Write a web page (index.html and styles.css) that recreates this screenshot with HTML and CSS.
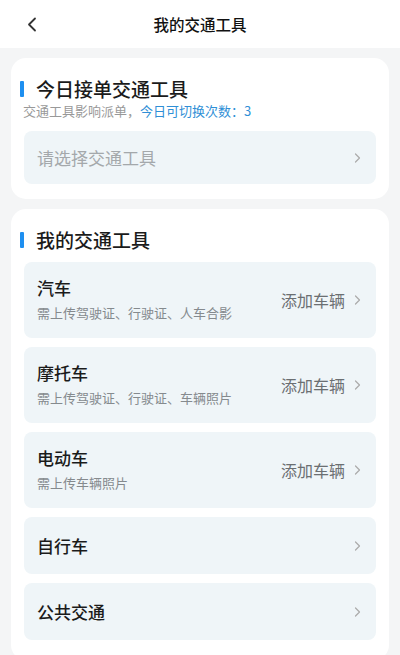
FILE: index.html
```html
<!DOCTYPE html>
<html lang="zh-CN">
<head>
<meta charset="utf-8">
<title>我的交通工具</title>
<link rel="stylesheet" href="styles.css">
</head>
<body>
<header class="topbar">
  <div class="back">
    <svg width="10" height="15" viewBox="0 0 10 15"><polyline points="8,1.5 2,7.5 8,13.5" fill="none" stroke="#333" stroke-width="1.8" stroke-linecap="round" stroke-linejoin="round"/></svg>
  </div>
  <div class="topbar-title">我的交通工具</div>
  <div></div>
</header>
<main class="content">
  <section class="card card-today">
    <h2 class="card-title">今日接单交通工具</h2>
    <p class="card-sub">交通工具影响派单，<span class="blue">今日可切换次数：3</span></p>
    <div class="select-box">
      <span class="placeholder">请选择交通工具</span>
      <svg class="chev" width="7" height="12" viewBox="0 0 7 12"><polyline points="1.5,2 5.5,6 1.5,10" fill="none" stroke="#aaa" stroke-width="1.2" stroke-linecap="round" stroke-linejoin="round"/></svg>
    </div>
  </section>
  <section class="card card-mine">
    <h2 class="card-title">我的交通工具</h2>
    <div class="list">
      <div class="row row-tall">
        <div class="row-main">
          <div class="row-title">汽车</div>
          <div class="row-desc">需上传驾驶证、行驶证、人车合影</div>
        </div>
        <span class="row-action">添加车辆</span>
        <svg class="chev" width="7" height="12" viewBox="0 0 7 12"><polyline points="1.5,2 5.5,6 1.5,10" fill="none" stroke="#aaa" stroke-width="1.2" stroke-linecap="round" stroke-linejoin="round"/></svg>
      </div>
      <div class="row row-tall">
        <div class="row-main">
          <div class="row-title">摩托车</div>
          <div class="row-desc">需上传驾驶证、行驶证、车辆照片</div>
        </div>
        <span class="row-action">添加车辆</span>
        <svg class="chev" width="7" height="12" viewBox="0 0 7 12"><polyline points="1.5,2 5.5,6 1.5,10" fill="none" stroke="#aaa" stroke-width="1.2" stroke-linecap="round" stroke-linejoin="round"/></svg>
      </div>
      <div class="row row-tall">
        <div class="row-main">
          <div class="row-title">电动车</div>
          <div class="row-desc">需上传车辆照片</div>
        </div>
        <span class="row-action">添加车辆</span>
        <svg class="chev" width="7" height="12" viewBox="0 0 7 12"><polyline points="1.5,2 5.5,6 1.5,10" fill="none" stroke="#aaa" stroke-width="1.2" stroke-linecap="round" stroke-linejoin="round"/></svg>
      </div>
      <div class="row row-short">
        <div class="row-main">
          <div class="row-title">自行车</div>
        </div>
        <svg class="chev" width="7" height="12" viewBox="0 0 7 12"><polyline points="1.5,2 5.5,6 1.5,10" fill="none" stroke="#aaa" stroke-width="1.2" stroke-linecap="round" stroke-linejoin="round"/></svg>
      </div>
      <div class="row row-short">
        <div class="row-main">
          <div class="row-title">公共交通</div>
        </div>
        <svg class="chev" width="7" height="12" viewBox="0 0 7 12"><polyline points="1.5,2 5.5,6 1.5,10" fill="none" stroke="#aaa" stroke-width="1.2" stroke-linecap="round" stroke-linejoin="round"/></svg>
      </div>
    </div>
  </section>
</main>
</body>
</html>
```
FILE: styles.css
```css
* { box-sizing: border-box; }
html, body { margin: 0; padding: 0; }
body {
  background: #f4f5f6;
  font-family: "Noto Sans CJK SC", "Noto Sans", sans-serif;
  color: #222;
  height: 655px;
  overflow: hidden;
}
.topbar {
  height: 48px;
  background: #fff;
  display: grid;
  grid-template-columns: 60px 1fr 60px;
  align-items: center;
}
.back {
  padding-left: 27px;
  display: flex;
  align-items: center;
}
.topbar-title {
  text-align: center;
  font-size: 15.5px;
  font-weight: 500;
  color: #111;
}
.content {
  padding: 10px 11px 0;
  display: flex;
  flex-direction: column;
  gap: 10px;
}
.card {
  background: #fff;
  border-radius: 15px;
  padding: 18px 13px 15px;
}
.card-mine { padding-bottom: 20px; }
.card-title {
  margin: 0;
  font-size: 19px;
  line-height: 26px;
  font-weight: 500;
  color: #1b1b1b;
  display: flex;
  align-items: center;
  gap: 12px;
  margin-left: -4px;
}
.card-title::before {
  content: "";
  width: 4px;
  height: 16px;
  background: #1e8ff0;
  border-radius: 1px;
}
.card-sub {
  margin: 0;
  margin-left: -1px;
  font-size: 13px;
  line-height: 18px;
  color: #999;
}
.blue { color: #2f8fd6; }
.select-box {
  margin-top: 11px;
  height: 53px;
  background: #eff5f8;
  border-radius: 8px;
  display: flex;
  align-items: center;
  padding: 0 15px 0 13px;
}
.placeholder {
  flex: 1;
  font-size: 17px;
  color: #a4a8ab;
}
.chev { flex: none; }
.list {
  margin-top: 9px;
  display: flex;
  flex-direction: column;
  gap: 9px;
}
.row {
  background: #eff5f8;
  border-radius: 8px;
  display: flex;
  align-items: center;
  padding: 0 15px 0 13px;
}
.row-tall { height: 76px; }
.row-tall .row-main { padding-bottom: 2px; }
.row-short { height: 57px; }
.row-main {
  flex: 1;
  display: flex;
  flex-direction: column;
}
.row-title {
  font-size: 17px;
  line-height: 22px;
  font-weight: 500;
  color: #1b1b1b;
}
.row-desc {
  font-size: 13px;
  line-height: 18px;
  color: #858a8e;
  margin-top: 5px;
}
.row-action {
  font-size: 16px;
  color: #6b6f72;
  margin-right: 9px;
}
```
